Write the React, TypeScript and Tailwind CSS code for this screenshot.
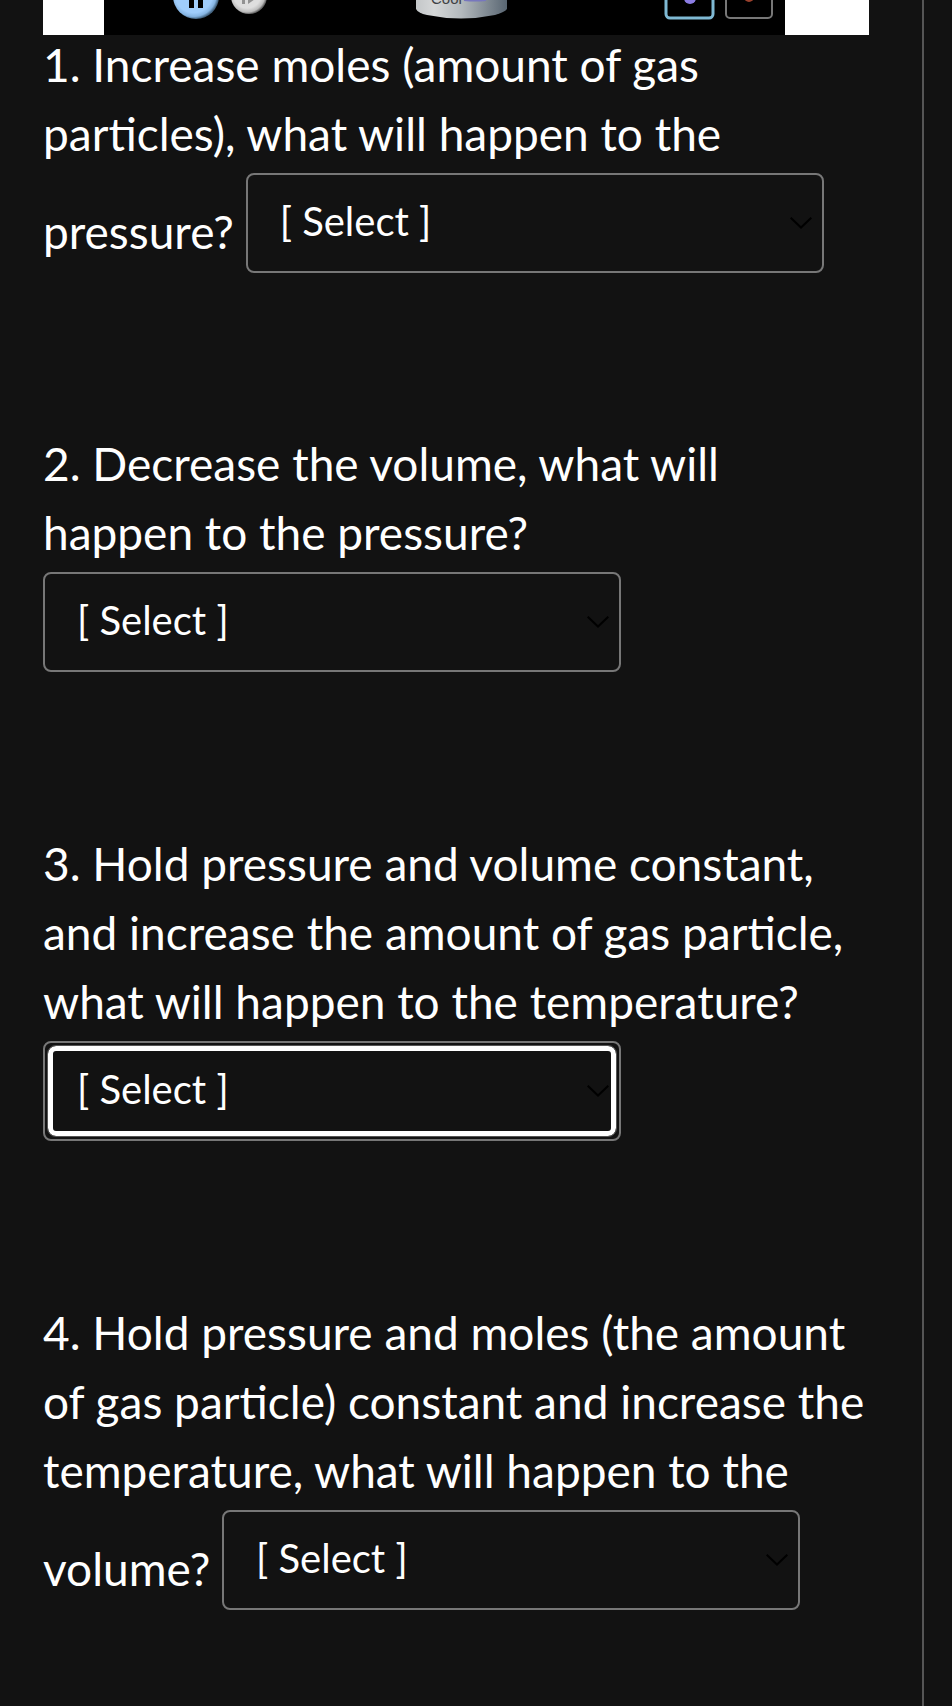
import { useId } from "react";
import type { ReactNode } from "react";
import { clsx } from "clsx";

interface AnswerSelectProps {
  id: string;
  focused?: boolean;
}

const AnswerSelect = ({ id, focused }: AnswerSelectProps) => {
  return (
    <span className="inline-block relative mt-[5px] mb-[34px] w-[578px] max-w-full align-middle">
      <select
        id={id}
        className="block pr-14 pb-1 pl-8 w-full h-[100px] text-[40px] text-white bg-[#121212] rounded-lg border-2 border-[#777] appearance-none outline-none"
      >
        <option>[ Select ]</option>
        <option>increase</option>
        <option>decrease</option>
        <option>stay the same</option>
      </select>
      {focused && (
        <span className="absolute inset-[5px] rounded-lg border-5 border-white outline-1 outline-[#555] pointer-events-none" />
      )}
      <svg
        viewBox="0 0 22 12"
        className="absolute top-11 right-3 w-[22px] h-3 pointer-events-none"
        fill="none"
        stroke="#000"
        strokeWidth="2"
      >
        <path d="M0.7 0.7 11 10.5 21.3 0.7" />
      </svg>
    </span>
  );
};

interface QuestionProps {
  children: ReactNode;
  focused?: boolean;
  className?: string;
}

const Question = ({ children, focused, className }: QuestionProps) => {
  const id = useId();

  return (
    <div className={clsx("text-[46px] leading-[69px]", className)}>
      <label htmlFor={id}>{children}</label>{" "}
      <AnswerSelect id={id} focused={focused} />
    </div>
  );
};

const Simulation = () => {
  return (
    <div className="flex pr-[84px] pl-[61px] -mb-[5px] h-[35px] bg-white">
      <svg
        viewBox="0 0 681 35"
        preserveAspectRatio="xMidYMax meet"
        className="w-full h-full bg-black"
      >
        <defs>
          <radialGradient id="pause" cx="0.45" cy="0.45" r="0.55">
            <stop offset="0.75" stopColor="#a0cdfb" />
            <stop offset="0.9" stopColor="#86b5e3" />
            <stop offset="1" stopColor="#456582" />
          </radialGradient>
          <radialGradient id="step" cx="0.45" cy="0.45" r="0.55">
            <stop offset="0.7" stopColor="#dedede" />
            <stop offset="0.9" stopColor="#bdbdbd" />
            <stop offset="1" stopColor="#686868" />
          </radialGradient>
          <linearGradient id="bucket">
            <stop offset="0" stopColor="#c4c7c9" />
            <stop offset="0.2" stopColor="#d5d7d8" />
            <stop offset="0.5" stopColor="#b3b9bd" />
            <stop offset="1" stopColor="#596672" />
          </linearGradient>
        </defs>
        <circle cx="92" cy="-4" r="23" fill="url(#pause)" />
        <path d="M85-8h5V8h-5zM94-8h5V8h-5z" fill="#000" />
        <circle cx="145" cy="-4" r="18" fill="url(#step)" />
        <path d="M138-8h3V4h-3zM144-9l10 6-10 7z" fill="#929292" />
        <path
          d="M312-6V9Q314 13 323 15 357 22 391 15 401 12 403 9V-6Z"
          fill="url(#bucket)"
        />
        <text
          x="327"
          y="4"
          fontFamily="Liberation Sans, sans-serif"
          fontSize="15"
          fill="#3f4245"
        >
          Cool
        </text>
        <path d="M360 0Q371 1 382 0" stroke="#7777be" strokeWidth="2" />
        <rect x="562" y="-20" width="47" height="38" rx="4" fill="none" stroke="#7fb9d4" strokeWidth="3" />
        <circle cx="586" cy="-2" r="6" fill="#8c7de4" />
        <rect x="622" y="-20" width="46" height="38" rx="4" fill="none" stroke="#777" strokeWidth="2" />
        <circle cx="645" cy="-3" r="5" fill="#9b412d" />
      </svg>
    </div>
  );
};

export default function App() {
  return (
    <div className="pr-7 min-h-screen bg-[#121212]">
      <main className="pr-[53px] pl-[43px] min-h-screen text-white border-r-2 border-[#555] font-[Lato,sans-serif]">
        <Simulation />
        <Question className="mb-[122px]">
          1. Increase moles (amount of gas particles), what will happen to the
          pressure?
        </Question>
        <Question className="mb-[123px]">
          2. Decrease the volume, what will happen to the pressure?
        </Question>
        <Question focused className="mb-[123px]">
          3. Hold pressure and volume constant, and increase the amount of gas
          particle, what will happen to the temperature?
        </Question>
        <Question>
          4. Hold pressure and moles (the amount of gas particle) constant and
          increase the temperature, what will happen to the volume?
        </Question>
      </main>
    </div>
  );
}
